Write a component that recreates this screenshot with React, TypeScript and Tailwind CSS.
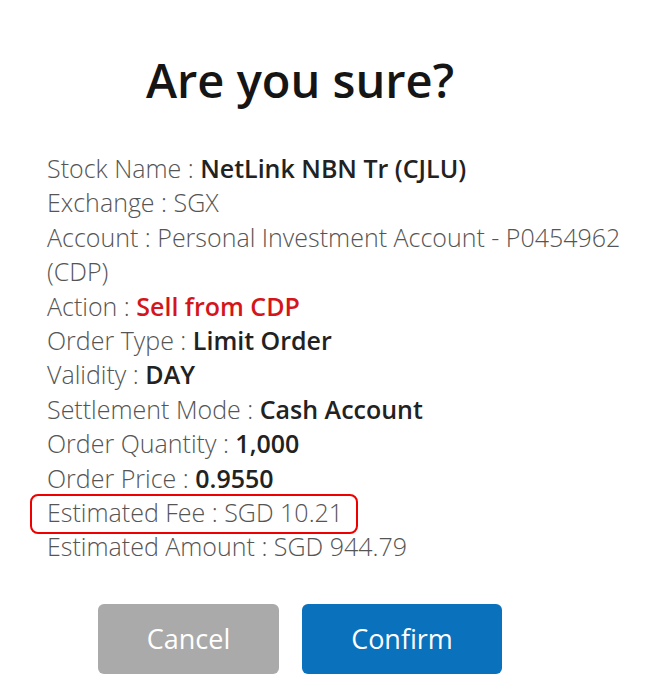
import React from "react";

const rows: { label: string; value: string; kind: "plain" | "bold" | "red" }[] = [
  { label: "Stock Name", value: "NetLink NBN Tr (CJLU)", kind: "bold" },
  { label: "Exchange", value: "SGX", kind: "plain" },
  { label: "Account", value: "Personal Investment Account - P0454962 (CDP)", kind: "plain" },
  { label: "Action", value: "Sell from CDP", kind: "red" },
  { label: "Order Type", value: "Limit Order", kind: "bold" },
  { label: "Validity", value: "DAY", kind: "bold" },
  { label: "Settlement Mode", value: "Cash Account", kind: "bold" },
  { label: "Order Quantity", value: "1,000", kind: "bold" },
  { label: "Order Price", value: "0.9550", kind: "bold" },
];

export default function App() {
  return (
    <div
      className="w-[648px] h-[699px] bg-white overflow-hidden"
      style={{ fontFamily: '"Open Sans", "Liberation Sans", sans-serif' }}
    >
      <div className="w-[600px] pt-[49px] text-center">
        <h1 className="text-[47px] leading-[62px] font-semibold text-[#151515]">Are you sure?</h1>
      </div>
      <div className="mt-[40px] pl-[47px] pr-[4px] text-[25px] leading-[34.4px] font-light text-[#555555]">
        {rows.map((r) => (
          <div key={r.label}>
            {r.label} :{" "}
            <span
              className={
                r.kind === "bold"
                  ? "font-semibold text-[#222222]"
                  : r.kind === "red"
                  ? "font-semibold text-[#d4161c]"
                  : ""
              }
            >
              {r.value}
            </span>
          </div>
        ))}
        <div className="relative">
          Estimated Fee : SGD 10.21
          <div className="absolute left-[-17px] top-[-1px] w-[328px] h-[40px] border-[2.5px] border-[#ee0000] rounded-[8px]" />
        </div>
        <div>Estimated Amount : SGD 944.79</div>
      </div>
      <div className="w-[600px] mt-[40px] flex justify-center gap-[23px]">
        <button className="w-[181px] h-[70px] rounded-[6px] bg-[#aaaaaa] text-white text-[27px]">
          Cancel
        </button>
        <button className="w-[200px] h-[70px] rounded-[6px] bg-[#0a71bd] text-white text-[27px]">
          Confirm
        </button>
      </div>
    </div>
  );
}
